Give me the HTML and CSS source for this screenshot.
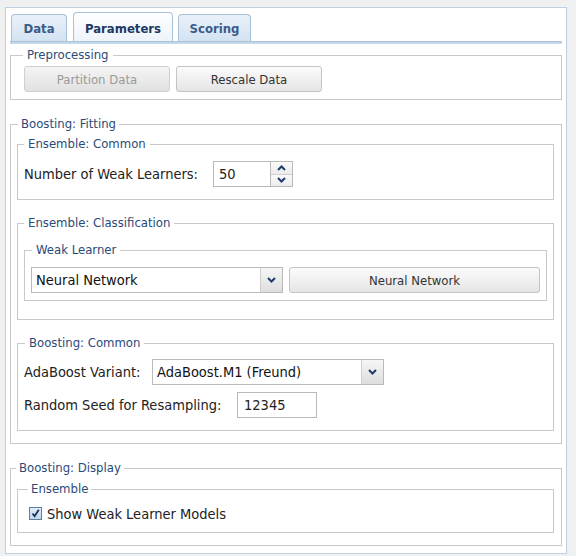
FILE: index.html
```html
<!DOCTYPE html>
<html>
<head>
<meta charset="utf-8">
<link rel="stylesheet" href="styles.css">
</head>
<body>
<div class="panel">
  <div class="tabs">
    <div class="tab tab-data">Data</div>
    <div class="tab tab-params active">Parameters</div>
    <div class="tab tab-scoring">Scoring</div>
  </div>
  <div class="tabbar"></div>

  <fieldset class="grp g-pre">
    <legend>Preprocessing</legend>
    <div class="btnrow">
      <button class="btn btn-pre" disabled>Partition Data</button>
      <button class="btn btn-pre">Rescale Data</button>
    </div>
  </fieldset>

  <fieldset class="grp g-outer g-fit">
    <legend>Boosting: Fitting</legend>
    <fieldset class="grp g-common">
      <legend>Ensemble: Common</legend>
      <div class="row">
        <span class="lbl lbl-weak">Number of Weak Learners:</span>
        <div class="spin">
          <div class="spin-input">50</div>
          <div class="spin-btns">
            <div class="spin-btn"><svg width="9" height="6" viewBox="0 0 9 6"><path d="M1 5 L4.5 1.5 L8 5" fill="none" stroke="#1f3d6c" stroke-width="2"/></svg></div>
            <div class="spin-btn spin-down"><svg width="9" height="6" viewBox="0 0 9 6"><path d="M1 1 L4.5 4.5 L8 1" fill="none" stroke="#1f3d6c" stroke-width="2"/></svg></div>
          </div>
        </div>
      </div>
    </fieldset>

    <fieldset class="grp g-class">
      <legend>Ensemble: Classification</legend>
      <fieldset class="grp g-wl">
        <legend>Weak Learner</legend>
        <div class="wlrow">
          <div class="select sel-wl">
            <span class="sel-value">Neural Network</span>
            <span class="sel-arrow"><svg width="9" height="6" viewBox="0 0 9 6"><path d="M1 1 L4.5 4.5 L8 1" fill="none" stroke="#1f3d6c" stroke-width="2"/></svg></span>
          </div>
          <button class="btn btn-nn">Neural Network</button>
        </div>
      </fieldset>
    </fieldset>

    <fieldset class="grp g-bcommon">
      <legend>Boosting: Common</legend>
      <div class="row">
        <span class="lbl lbl-variant">AdaBoost Variant:</span>
        <div class="select sel-variant">
          <span class="sel-value">AdaBoost.M1 (Freund)</span>
          <span class="sel-arrow"><svg width="9" height="6" viewBox="0 0 9 6"><path d="M1 1 L4.5 4.5 L8 1" fill="none" stroke="#1f3d6c" stroke-width="2"/></svg></span>
        </div>
      </div>
      <div class="row row-seed">
        <span class="lbl lbl-seed">Random Seed for Resampling:</span>
        <div class="text-input">12345</div>
      </div>
    </fieldset>
  </fieldset>

  <fieldset class="grp g-outer g-disp">
    <legend>Boosting: Display</legend>
    <fieldset class="grp g-ens">
      <legend>Ensemble</legend>
      <label class="check-row">
        <span class="checkbox"><svg width="11" height="11" viewBox="0 0 11 11"><path d="M2.5 5.5 L4.6 8.3 L8.8 1.8" fill="none" stroke="#14305c" stroke-width="1.8"/></svg></span>
        <span>Show Weak Learner Models</span>
      </label>
    </fieldset>
  </fieldset>
</div>
</body>
</html>
```

FILE: styles.css
```css
body {
  margin: 0;
  background: #f0f0f0;
  font-family: "DejaVu Sans Condensed", "DejaVu Sans", sans-serif;
  font-stretch: condensed;
  font-size: 14.5px;
  color: #222;
}

.panel {
  width: 562px;
  box-sizing: border-box;
  margin: 7px 0 0 5px;
  background: #fff;
  border: 1px solid #bcd0e1;
  padding: 0 4px 7px;
}

/* Tabs */
.tabs {
  display: flex;
  align-items: flex-end;
  height: 33px;
  box-sizing: border-box;
  padding: 4px 0 0 1px;
}
.tab {
  box-sizing: border-box;
  height: 27px;
  border: 1px solid #a9c1d8;
  border-bottom: none;
  border-radius: 4px 4px 0 0;
  background: linear-gradient(#e9f1f9, #d3e3f2);
  font-size: 13px;
  font-weight: bold;
  color: #3b5b87;
  display: flex;
  align-items: center;
  justify-content: center;
}
.tab-data { width: 56px; }
.tab-params {
  width: 100px;
  margin-left: 6px;
  height: 29px;
  padding-top: 2px;
  background: linear-gradient(#fdfeff, #eef4fa);
  color: #1d3963;
}
.tab-scoring { width: 73px; margin-left: 5px; }
.tabbar {
  height: 2px;
  background: #c4d8ea;
  border-top: 1px solid #a9c2d8;
}

/* Group boxes */
.grp {
  margin: 0;
  min-width: 0;
  box-sizing: border-box;
  border: 1px solid #c9c9c9;
}
.grp > legend {
  font-size: 13px;
  line-height: 16px;
  color: #2b4a78;
  padding: 0 3px;
}
.g-pre { margin-top: 3px; padding: 3px 0 7px 13px; }
.g-pre > legend { margin-left: -1px; padding: 0 4px; }

.g-outer { margin-top: 16px; }
.g-fit { padding: 4px 7px 12px 6px; }
.g-fit > legend { margin-left: 1px; }

.g-common { padding: 9px 6px 12px 6px; }
.g-common > legend { padding: 0 4px; }

.g-class { margin-top: 15px; padding: 11px 6px 18px 6px; }
.g-class > legend { padding: 0 4px; }

.g-wl { padding: 9px 6px 7px 6px; }
.g-wl > legend { margin-left: 1px; padding: 0 4px; }

.g-bcommon { margin-top: 15px; padding: 8px 6px 12px 6px; }
.g-bcommon > legend { margin-left: 1px; padding: 0 4px; }

.g-disp { padding: 5px 7px 12px 6px; }
.g-disp > legend { margin-left: -1px; }

.g-ens { padding: 8px 6px 10px 11px; }
.g-ens > legend { margin-left: -1px; }

/* Buttons */
.btnrow { display: flex; gap: 6px; }
.btn {
  box-sizing: border-box;
  height: 26px;
  border: 1px solid #c4c4c4;
  border-radius: 3px;
  background: linear-gradient(#fbfbfb, #e5e5e5);
  font-family: inherit;
  font-stretch: condensed;
  font-size: 13px;
  color: #333;
  padding: 0;
}
.btn:disabled {
  color: #9a9a9a;
  background: linear-gradient(#f4f4f4, #e1e1e1);
  border-color: #d0d0d0;
}
.btn-pre { width: 146px; }
.btn-nn { width: 251px; }

/* Rows */
.row { display: flex; align-items: center; height: 26px; }
.row-seed { margin-top: 7px; }
.lbl { color: #222; }
.lbl-weak { width: 189px; }
.lbl-variant { width: 128px; }
.lbl-seed { width: 213px; }

/* Spinner */
.spin { display: flex; height: 26px; }
.spin-input {
  box-sizing: border-box;
  width: 57px;
  border: 1px solid #b9b9b9;
  border-right: none;
  padding-left: 5px;
  line-height: 24px;
}
.spin-btns {
  box-sizing: border-box;
  width: 23px;
  border: 1px solid #b9b9b9;
  display: flex;
  flex-direction: column;
}
.spin-btn {
  flex: 1;
  display: flex;
  align-items: center;
  justify-content: center;
  background: linear-gradient(#fafafa, #ececec);
}
.spin-down { border-top: 1px solid #d2d2d2; }

/* Select */
.wlrow { display: flex; gap: 6px; }
.select {
  box-sizing: border-box;
  display: flex;
  height: 26px;
  border: 1px solid #b9b9b9;
  background: #fff;
}
.sel-wl { width: 252px; }
.sel-variant { width: 232px; }
.sel-value {
  flex: 1;
  padding-left: 4px;
  line-height: 24px;
  color: #111;
}
.sel-arrow {
  width: 21px;
  border-left: 1px solid #cfcfcf;
  background: linear-gradient(#f6f6f6, #dedede);
  display: flex;
  align-items: center;
  justify-content: center;
}

/* Text input */
.text-input {
  box-sizing: border-box;
  width: 80px;
  height: 26px;
  border: 1px solid #b9b9b9;
  padding-left: 6px;
  line-height: 24px;
}

/* Checkbox */
.check-row {
  display: flex;
  align-items: center;
  gap: 5px;
  height: 17px;
}
.checkbox {
  box-sizing: border-box;
  width: 13px;
  height: 13px;
  border: 1px solid #5b7da3;
  background: linear-gradient(#e3edf8, #c3d6eb);
  display: flex;
  align-items: center;
  justify-content: center;
}
```
